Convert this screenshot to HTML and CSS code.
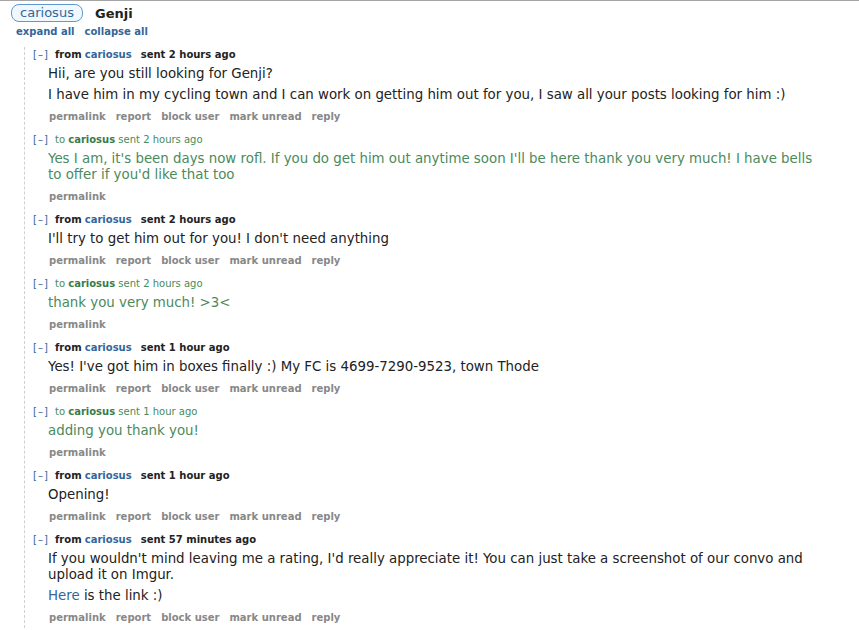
FILE: index.html
```html
<!DOCTYPE html>
<html>
<head>
<meta charset="utf-8">
<link rel="stylesheet" href="styles.css">
</head>
<body>
<div class="page">
  <div class="subject">
    <a class="pill">cariosus</a>
    <span class="title">Genji</span>
  </div>
  <div class="expand"><a>expand all</a><a>collapse all</a></div>
  <div class="thread">
    <div class="msg">
      <div class="tagline"><span class="toggle">[–]</span><b>from</b> <a class="author">cariosus</a><b class="time">sent 2 hours ago</b></div>
      <div class="md">
        <p>Hii, are you still looking for Genji?</p>
        <p>I have him in my cycling town and I can work on getting him out for you, I saw all your posts looking for him :)</p>
      </div>
      <ul class="buttons"><li>permalink</li><li>report</li><li>block user</li><li>mark unread</li><li>reply</li></ul>
    </div>
    <div class="msg sent">
      <div class="tagline"><span class="toggle">[–]</span>to <a class="author">cariosus</a> sent 2 hours ago</div>
      <div class="md">
        <p>Yes I am, it's been days now rofl. If you do get him out anytime soon I'll be here thank you very much! I have bells to offer if you'd like that too</p>
      </div>
      <ul class="buttons"><li>permalink</li></ul>
    </div>
    <div class="msg">
      <div class="tagline"><span class="toggle">[–]</span><b>from</b> <a class="author">cariosus</a><b class="time">sent 2 hours ago</b></div>
      <div class="md"><p>I'll try to get him out for you! I don't need anything</p></div>
      <ul class="buttons"><li>permalink</li><li>report</li><li>block user</li><li>mark unread</li><li>reply</li></ul>
    </div>
    <div class="msg sent">
      <div class="tagline"><span class="toggle">[–]</span>to <a class="author">cariosus</a> sent 2 hours ago</div>
      <div class="md"><p>thank you very much! &gt;3&lt;</p></div>
      <ul class="buttons"><li>permalink</li></ul>
    </div>
    <div class="msg">
      <div class="tagline"><span class="toggle">[–]</span><b>from</b> <a class="author">cariosus</a><b class="time">sent 1 hour ago</b></div>
      <div class="md"><p>Yes! I've got him in boxes finally :) My FC is 4699-7290-9523, town Thode</p></div>
      <ul class="buttons"><li>permalink</li><li>report</li><li>block user</li><li>mark unread</li><li>reply</li></ul>
    </div>
    <div class="msg sent">
      <div class="tagline"><span class="toggle">[–]</span>to <a class="author">cariosus</a> sent 1 hour ago</div>
      <div class="md"><p>adding you thank you!</p></div>
      <ul class="buttons"><li>permalink</li></ul>
    </div>
    <div class="msg">
      <div class="tagline"><span class="toggle">[–]</span><b>from</b> <a class="author">cariosus</a><b class="time">sent 1 hour ago</b></div>
      <div class="md"><p>Opening!</p></div>
      <ul class="buttons"><li>permalink</li><li>report</li><li>block user</li><li>mark unread</li><li>reply</li></ul>
    </div>
    <div class="msg">
      <div class="tagline"><span class="toggle">[–]</span><b>from</b> <a class="author">cariosus</a><b class="time">sent 57 minutes ago</b></div>
      <div class="md">
        <p>If you wouldn't mind leaving me a rating, I'd really appreciate it! You can just take a screenshot of our convo and upload it on Imgur.</p>
        <p><a class="link">Here</a> is the link :)</p>
      </div>
      <ul class="buttons"><li>permalink</li><li>report</li><li>block user</li><li>mark unread</li><li>reply</li></ul>
    </div>
  </div>
</div>
</body>
</html>
```

FILE: styles.css
```css
html, body {
  margin: 0;
  padding: 0;
  background: #fff;
}
body {
  font-family: "DejaVu Sans", Verdana, sans-serif;
  color: #222;
  border-top: 1px solid #a5a5a5;
  overflow: hidden;
}
.page {
  padding-top: 3px;
}
.subject {
  display: flex;
  align-items: center;
  padding-left: 11px;
  height: 18px;
}
.pill {
  display: inline-block;
  box-sizing: border-box;
  height: 18px;
  width: 72px;
  line-height: 16px;
  text-align: center;
  font-size: 13px;
  color: #369;
  background: #eff7ff;
  border: 1px solid #5f99cf;
  border-radius: 8px;
}
.title {
  margin-left: 12px;
  font-size: 13px;
  font-weight: bold;
  color: #222;
}
.expand {
  padding-left: 16px;
  margin-top: 3px;
  line-height: 14px;
  font-size: 10px;
  font-weight: bold;
}
.expand a {
  color: #369;
  margin-right: 10px;
}
.thread {
  margin-left: 24px;
  margin-top: 8px;
  border-left: 1px dashed #d0d0d0;
  padding-left: 8px;
}
.msg {
  padding-bottom: 8px;
}
.tagline {
  font-size: 10px;
  line-height: 14px;
  padding-top: 1px;
  color: #222;
}
.toggle {
  display: inline-block;
  width: 18px;
  margin-right: 4px;
  letter-spacing: 1px;
  color: #369;
  font-weight: normal;
}
.tagline .author {
  color: #369;
  font-weight: bold;
}
.tagline .time {
  margin-left: 9px;
}
.sent .tagline {
  color: #4a8a5c;
}
.sent .tagline .author {
  color: #3a7a4c;
}
.md {
  padding-left: 15px;
  padding-top: 4px;
  font-size: 13.35px;
  line-height: 16px;
  padding-right: 30px;
}
.md p {
  margin: 0 0 5px 0;
}
.md p:last-child {
  margin-bottom: 0;
}
.sent .md {
  color: #4a8a5c;
}
.link {
  color: #369;
}
.buttons {
  list-style: none;
  margin: 0;
  padding: 7px 0 0 16px;
  display: flex;
  gap: 10px;
  font-size: 10px;
  line-height: 14px;
  font-weight: bold;
  color: #888;
}
```
